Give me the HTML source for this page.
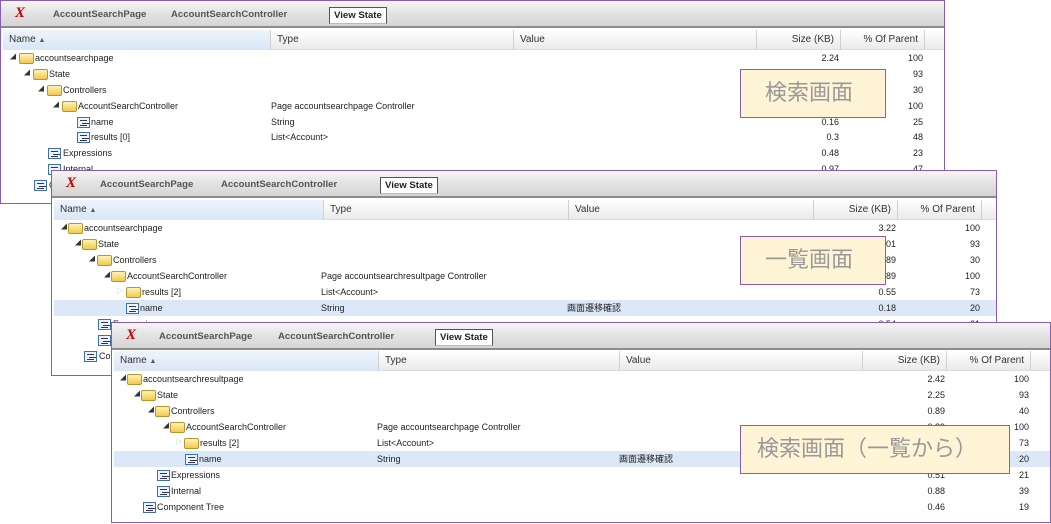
<!DOCTYPE html>
<html><head><meta charset="utf-8">
<style>
*{margin:0;padding:0;box-sizing:border-box}
body{width:1051px;height:524px;background:#fff;position:relative;overflow:hidden;font-family:"Liberation Sans","Noto Sans CJK JP",sans-serif;color:#222}
.p{position:absolute;background:#fff;border:1px solid #8a5cb5;overflow:hidden}
.tb{position:absolute;left:0;top:0;right:0;height:27px;background:linear-gradient(#f6f6f6,#e2e2e2 50%,#d6d6d6);border-bottom:2px solid #8c8c8c}
.tb span{position:absolute;top:8px;font-size:9.6px;font-weight:bold;color:#555}
.tb .vs{top:6px;background:#fff;border:1px solid #555;border-bottom-color:#bbb;padding:2px 4px;color:#222}
.tb .x{position:absolute;left:14px;top:4px;font:italic bold 15px "Liberation Serif",serif;color:#c00}
.hd{position:absolute;left:2px;right:0;top:29px;height:20px;background:linear-gradient(#fff,#eaeaea);border-bottom:1px solid #ddd}
.hd div{position:absolute;top:0;height:20px;font-size:10px;color:#333;line-height:20px;border-right:1px solid #d0d0d0;padding:0 6px}
.hd .n{background:linear-gradient(#eef4fc,#d9e6f6)}
.r{position:absolute;left:2px;right:0;height:16px;font-size:9px;line-height:16px;white-space:nowrap}
.r span{position:absolute;top:0}
.sel{background:#dce8f8}
.t{font-size:6px;color:#333}
.f{display:inline-block;position:absolute;top:3px;width:15px;height:11px;background:linear-gradient(#fff3b8,#f2c94c);border:1px solid #b9962a;border-radius:2px}
.fi{position:absolute;top:3px;width:13px;height:11px;border:1px solid #3d6fb3;background:#eef4fb}
.fi:before{content:"";position:absolute;left:2px;top:2px;width:7px;height:1px;background:#335;box-shadow:2px 3px 0 #335,0 5px 0 #335}
.num{text-align:right}
.note{position:absolute;background:#fff4d6;border:1px solid #8a5cb5;color:#999;font-size:22px;line-height:46px;padding-left:24px;font-family:"Liberation Sans","Noto Sans CJK JP",sans-serif}
</style></head><body>

<!-- Panel 1 -->
<div class="p" style="left:0;top:0;width:945px;height:204px">
 <div class="tb"><i class="x">X</i><span style="left:52px">AccountSearchPage</span><span style="left:170px">AccountSearchController</span><span class="vs" style="left:328px">View State</span></div>
 <div class="hd"><div class="n" style="left:0;width:268px">Name <span style="font-size:7px;color:#557">▲</span></div><div style="left:268px;width:243px">Type</div><div style="left:511px;width:243px">Value</div><div style="left:754px;width:84px;text-align:right">Size (KB)</div><div style="left:838px;width:84px;text-align:right">% Of Parent</div></div>
 <div class="r" style="top:49px"><span class="t" style="left:7px">◢</span><i class="f" style="left:16px"></i><span style="left:32px">accountsearchpage</span><span class="num" style="left:754px;width:82px">2.24</span><span class="num" style="left:838px;width:82px">100</span></div>
 <div class="r" style="top:65px"><span class="t" style="left:21px">◢</span><i class="f" style="left:30px"></i><span style="left:46px">State</span><span class="num" style="left:754px;width:82px">2.08</span><span class="num" style="left:838px;width:82px">93</span></div>
 <div class="r" style="top:81px"><span class="t" style="left:35px">◢</span><i class="f" style="left:44px"></i><span style="left:60px">Controllers</span><span class="num" style="left:754px;width:82px">0.67</span><span class="num" style="left:838px;width:82px">30</span></div>
 <div class="r" style="top:97px"><span class="t" style="left:50px">◢</span><i class="f" style="left:59px"></i><span style="left:75px">AccountSearchController</span><span style="left:268px">Page accountsearchpage Controller</span><span class="num" style="left:754px;width:82px">0.67</span><span class="num" style="left:838px;width:82px">100</span></div>
 <div class="r" style="top:113px"><i class="fi" style="left:74px"></i><span style="left:88px">name</span><span style="left:268px">String</span><span class="num" style="left:754px;width:82px">0.16</span><span class="num" style="left:838px;width:82px">25</span></div>
 <div class="r" style="top:128px"><i class="fi" style="left:74px"></i><span style="left:88px">results [0]</span><span style="left:268px">List&lt;Account&gt;</span><span class="num" style="left:754px;width:82px">0.3</span><span class="num" style="left:838px;width:82px">48</span></div>
 <div class="r" style="top:144px"><i class="fi" style="left:45px"></i><span style="left:60px">Expressions</span><span class="num" style="left:754px;width:82px">0.48</span><span class="num" style="left:838px;width:82px">23</span></div>
 <div class="r" style="top:160px"><i class="fi" style="left:45px"></i><span style="left:60px">Internal</span><span class="num" style="left:754px;width:82px">0.97</span><span class="num" style="left:838px;width:82px">47</span></div>
 <div class="r" style="top:176px"><i class="fi" style="left:31px"></i><span style="left:46px">Component Tree</span></div>
</div>
<div class="note" style="left:740px;top:69px;width:146px;height:49px">検索画面</div>

<!-- Panel 2 -->
<div class="p" style="left:51px;top:170px;width:946px;height:206px">
 <div class="tb"><i class="x">X</i><span style="left:48px">AccountSearchPage</span><span style="left:169px">AccountSearchController</span><span class="vs" style="left:328px">View State</span></div>
 <div class="hd"><div class="n" style="left:0;width:270px">Name <span style="font-size:7px;color:#557">▲</span></div><div style="left:270px;width:245px">Type</div><div style="left:515px;width:245px">Value</div><div style="left:760px;width:84px;text-align:right">Size (KB)</div><div style="left:844px;width:84px;text-align:right">% Of Parent</div></div>
 <div class="r" style="top:49px"><span class="t" style="left:7px">◢</span><i class="f" style="left:14px"></i><span style="left:30px">accountsearchpage</span><span class="num" style="left:760px;width:82px">3.22</span><span class="num" style="left:844px;width:82px">100</span></div>
 <div class="r" style="top:65px"><span class="t" style="left:21px">◢</span><i class="f" style="left:28px"></i><span style="left:44px">State</span><span class="num" style="left:760px;width:82px">3.01</span><span class="num" style="left:844px;width:82px">93</span></div>
 <div class="r" style="top:81px"><span class="t" style="left:35px">◢</span><i class="f" style="left:43px"></i><span style="left:59px">Controllers</span><span class="num" style="left:760px;width:82px">0.89</span><span class="num" style="left:844px;width:82px">30</span></div>
 <div class="r" style="top:97px"><span class="t" style="left:50px">◢</span><i class="f" style="left:57px"></i><span style="left:73px">AccountSearchController</span><span style="left:267px">Page accountsearchresultpage Controller</span><span class="num" style="left:760px;width:82px">0.89</span><span class="num" style="left:844px;width:82px">100</span></div>
 <div class="r" style="top:113px"><span class="t" style="left:63px;color:#aaa">▷</span><i class="f" style="left:72px"></i><span style="left:88px">results [2]</span><span style="left:267px">List&lt;Account&gt;</span><span class="num" style="left:760px;width:82px">0.55</span><span class="num" style="left:844px;width:82px">73</span></div>
 <div class="r sel" style="top:129px"><i class="fi" style="left:72px"></i><span style="left:86px">name</span><span style="left:267px">String</span><span style="left:513px">画面遷移確認</span><span class="num" style="left:760px;width:82px">0.18</span><span class="num" style="left:844px;width:82px">20</span></div>
 <div class="r" style="top:145px"><i class="fi" style="left:44px"></i><span style="left:59px">Expressions</span><span class="num" style="left:760px;width:82px">0.54</span><span class="num" style="left:844px;width:82px">21</span></div>
 <div class="r" style="top:161px"><i class="fi" style="left:44px"></i><span style="left:59px">Internal</span></div>
 <div class="r" style="top:177px"><i class="fi" style="left:30px"></i><span style="left:45px">Component Tree</span></div>
</div>
<div class="note" style="left:740px;top:236px;width:146px;height:49px">一覧画面</div>

<!-- Panel 3 -->
<div class="p" style="left:111px;top:322px;width:940px;height:201px">
 <div class="tb"><i class="x">X</i><span style="left:47px">AccountSearchPage</span><span style="left:166px">AccountSearchController</span><span class="vs" style="left:323px">View State</span></div>
 <div class="hd" style="top:28px"><div class="n" style="left:0;width:265px">Name <span style="font-size:7px;color:#557">▲</span></div><div style="left:265px;width:241px">Type</div><div style="left:506px;width:243px">Value</div><div style="left:749px;width:84px;text-align:right">Size (KB)</div><div style="left:833px;width:84px;text-align:right">% Of Parent</div></div>
 <div class="r" style="top:48px"><span class="t" style="left:6px">◢</span><i class="f" style="left:13px"></i><span style="left:29px">accountsearchresultpage</span><span class="num" style="left:749px;width:82px">2.42</span><span class="num" style="left:833px;width:82px">100</span></div>
 <div class="r" style="top:64px"><span class="t" style="left:20px">◢</span><i class="f" style="left:27px"></i><span style="left:43px">State</span><span class="num" style="left:749px;width:82px">2.25</span><span class="num" style="left:833px;width:82px">93</span></div>
 <div class="r" style="top:80px"><span class="t" style="left:34px">◢</span><i class="f" style="left:41px"></i><span style="left:57px">Controllers</span><span class="num" style="left:749px;width:82px">0.89</span><span class="num" style="left:833px;width:82px">40</span></div>
 <div class="r" style="top:96px"><span class="t" style="left:49px">◢</span><i class="f" style="left:56px"></i><span style="left:72px">AccountSearchController</span><span style="left:263px">Page accountsearchpage Controller</span><span class="num" style="left:749px;width:82px">0.89</span><span class="num" style="left:833px;width:82px">100</span></div>
 <div class="r" style="top:112px"><span class="t" style="left:62px;color:#aaa">▷</span><i class="f" style="left:70px"></i><span style="left:86px">results [2]</span><span style="left:263px">List&lt;Account&gt;</span><span class="num" style="left:749px;width:82px">0.65</span><span class="num" style="left:833px;width:82px">73</span></div>
 <div class="r sel" style="top:128px"><i class="fi" style="left:71px"></i><span style="left:85px">name</span><span style="left:263px">String</span><span style="left:505px">画面遷移確認</span><span class="num" style="left:749px;width:82px">0.18</span><span class="num" style="left:833px;width:82px">20</span></div>
 <div class="r" style="top:144px"><i class="fi" style="left:43px"></i><span style="left:57px">Expressions</span><span class="num" style="left:749px;width:82px">0.51</span><span class="num" style="left:833px;width:82px">21</span></div>
 <div class="r" style="top:160px"><i class="fi" style="left:43px"></i><span style="left:57px">Internal</span><span class="num" style="left:749px;width:82px">0.88</span><span class="num" style="left:833px;width:82px">39</span></div>
 <div class="r" style="top:176px"><i class="fi" style="left:29px"></i><span style="left:43px">Component Tree</span><span class="num" style="left:749px;width:82px">0.46</span><span class="num" style="left:833px;width:82px">19</span></div>
</div>
<div class="note" style="left:740px;top:425px;width:270px;height:49px;padding-left:16px">検索画面（一覧から）</div>

</body></html>
